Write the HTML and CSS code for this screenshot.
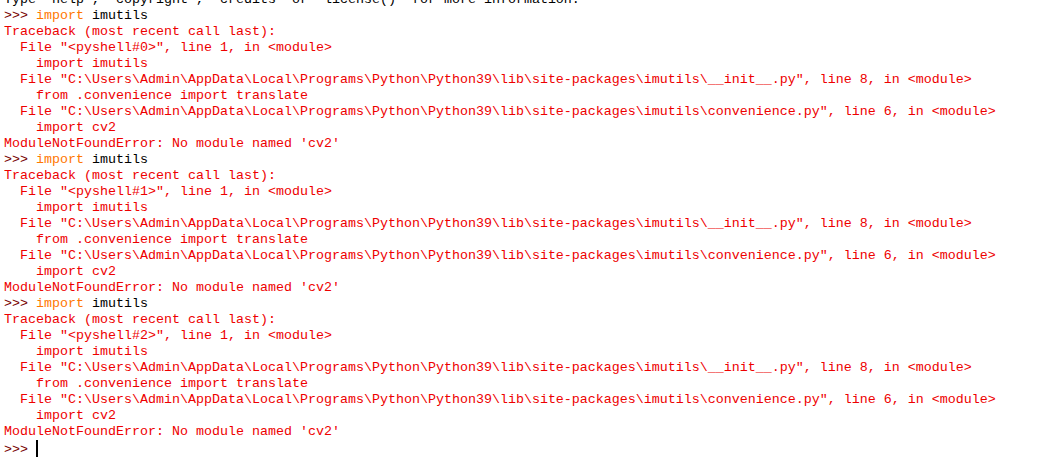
FILE: index.html
```html
<!DOCTYPE html>
<html>
<head>
<meta charset="utf-8">
<link rel="stylesheet" href="styles.css">
</head>
<body>
<pre class="shell"><span class="out">Type "help", "copyright", "credits" or "license()" for more information.</span>
<span class="prompt">&gt;&gt;&gt; </span><span class="kw">import</span> imutils
<span class="err">Traceback (most recent call last):
  File "&lt;pyshell#0&gt;", line 1, in &lt;module&gt;
    import imutils
  File "C:\Users\Admin\AppData\Local\Programs\Python\Python39\lib\site-packages\imutils\__init__.py", line 8, in &lt;module&gt;
    from .convenience import translate
  File "C:\Users\Admin\AppData\Local\Programs\Python\Python39\lib\site-packages\imutils\convenience.py", line 6, in &lt;module&gt;
    import cv2
ModuleNotFoundError: No module named 'cv2'</span>
<span class="prompt">&gt;&gt;&gt; </span><span class="kw">import</span> imutils
<span class="err">Traceback (most recent call last):
  File "&lt;pyshell#1&gt;", line 1, in &lt;module&gt;
    import imutils
  File "C:\Users\Admin\AppData\Local\Programs\Python\Python39\lib\site-packages\imutils\__init__.py", line 8, in &lt;module&gt;
    from .convenience import translate
  File "C:\Users\Admin\AppData\Local\Programs\Python\Python39\lib\site-packages\imutils\convenience.py", line 6, in &lt;module&gt;
    import cv2
ModuleNotFoundError: No module named 'cv2'</span>
<span class="prompt">&gt;&gt;&gt; </span><span class="kw">import</span> imutils
<span class="err">Traceback (most recent call last):
  File "&lt;pyshell#2&gt;", line 1, in &lt;module&gt;
    import imutils
  File "C:\Users\Admin\AppData\Local\Programs\Python\Python39\lib\site-packages\imutils\__init__.py", line 8, in &lt;module&gt;
    from .convenience import translate
  File "C:\Users\Admin\AppData\Local\Programs\Python\Python39\lib\site-packages\imutils\convenience.py", line 6, in &lt;module&gt;
    import cv2
ModuleNotFoundError: No module named 'cv2'</span>
<span class="prompt">&gt;&gt;&gt; </span><span class="cursor"></span></pre>
</body>
</html>
```

FILE: styles.css
```css
html, body {
  margin: 0;
  padding: 0;
  background: #ffffff;
  overflow: hidden;
}

.shell {
  margin: -8px 0 0 0;
  padding: 0 0 0 4px;
  font-family: "Liberation Mono", "Courier New", monospace;
  font-size: 13.333px;
  line-height: 16px;
  color: #000000;
  white-space: pre;
}

.out {
  color: #000000;
}

.prompt {
  color: #770000;
}

.kw {
  color: #ff7700;
}

.err {
  color: #ee0000;
}

.cursor {
  display: inline-block;
  width: 2px;
  height: 17px;
  background: #000000;
  vertical-align: -4px;
}
```
